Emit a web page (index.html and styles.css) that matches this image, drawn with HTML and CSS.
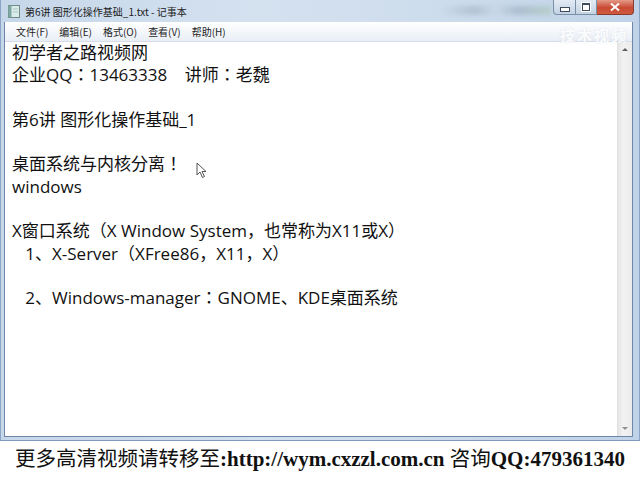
FILE: index.html
```html
<!DOCTYPE html>
<html lang="zh-CN">
<head>
<meta charset="utf-8">
<title>第6讲 图形化操作基础_1.txt - 记事本</title>
<link rel="stylesheet" href="styles.css">
</head>
<body>
<div class="window">
  <div class="titlebar">
    <svg class="app-icon" width="14" height="13" viewBox="0 0 14 13">
      <rect x="1.5" y="0.5" width="11" height="12" fill="#d9ece9" stroke="#6f8c8a"/>
      <rect x="1.5" y="0.5" width="3" height="12" fill="#7fa7a4"/>
      <line x1="6" y1="4" x2="11" y2="4" stroke="#a9c4c1"/>
      <line x1="6" y1="7" x2="11" y2="7" stroke="#a9c4c1"/>
    </svg>
    <span class="title">第6讲 图形化操作基础_1.txt - 记事本</span>
    <div class="blur-area"></div>
    <div class="controls">
      <div class="btn btn-min"><span class="min-glyph"></span></div>
      <div class="btn btn-max"><span class="max-glyph"></span></div>
      <div class="btn btn-close">
        <svg width="10" height="8" viewBox="0 0 10 8"><path d="M1 0.5 L9 7.5 M9 0.5 L1 7.5" stroke="#fff" stroke-width="2"/></svg>
      </div>
    </div>
  </div>
  <div class="client">
    <div class="menubar">
      <span class="menu-item">文件(F)</span>
      <span class="menu-item">编辑(E)</span>
      <span class="menu-item">格式(O)</span>
      <span class="menu-item">查看(V)</span>
      <span class="menu-item">帮助(H)</span>
      <span class="watermark">技术视频</span>
    </div>
    <div class="edit">
      <div class="text">
        <div class="line">初学者之路视频网</div>
        <div class="line">企业QQ：13463338&nbsp;&nbsp;&nbsp;&nbsp;讲师：老魏</div>
        <div class="line">&nbsp;</div>
        <div class="line">第6讲 图形化操作基础_1</div>
        <div class="line">&nbsp;</div>
        <div class="line">桌面系统与内核分离！</div>
        <div class="line">windows</div>
        <div class="line">&nbsp;</div>
        <div class="line">X窗口系统（X Window System，也常称为X11或X）</div>
        <div class="line">&nbsp;&nbsp;&nbsp;1、X-Server（XFree86，X11，X）</div>
        <div class="line">&nbsp;</div>
        <div class="line">&nbsp;&nbsp;&nbsp;2、Windows-manager：GNOME、KDE桌面系统</div>
        <svg class="cursor" width="12" height="17" viewBox="0 0 12 17">
          <path d="M1 1 L1 13 L4 10 L6.5 15.5 L8.5 14.5 L6 9.5 L10 9.5 Z" fill="#fff" stroke="#555" stroke-width="1" stroke-linejoin="round"/>
        </svg>
      </div>
      <div class="scrollbar">
        <span class="arrow-up"></span>
        <span class="arrow-down"></span>
      </div>
    </div>
  </div>
</div>
<div class="caption"><span class="cjk">更多高清视频请转移至</span>:http://wym.cxzzl.com.cn <span class="cjk">咨询</span>QQ:479361340</div>
</body>
</html>
```
FILE: styles.css
```css
html, body {
  margin: 0;
  padding: 0;
  background: #ffffff;
}
body {
  width: 640px;
  height: 496px;
  overflow: hidden;
  font-family: "Noto Sans CJK SC", sans-serif;
}
.window {
  height: 441px;
  background: linear-gradient(90deg, #c6d7ea 0%, #d4e1ef 40%, #cddcec 70%, #bfd2e7 100%);
  display: flex;
  flex-direction: column;
  box-sizing: border-box;
  border-left: 1px solid #8aa5c6;
  border-right: 1px solid #8aa5c6;
  border-bottom: 1px solid #7f9cbf;
}
.titlebar {
  height: 22px;
  display: flex;
  align-items: center;
  position: relative;
  flex: none;
}
.app-icon {
  margin-left: 6px;
  margin-top: 1px;
}
.title {
  margin-left: 4px;
  font-size: 10px;
  color: #1a1a1a;
  line-height: 14px;
  margin-top: 1px;
}
.blur-area {
  position: absolute;
  left: 440px;
  top: 6px;
  width: 110px;
  height: 9px;
  background: linear-gradient(90deg, rgba(150,165,185,0) 0%, rgba(150,165,185,0.45) 30%, rgba(200,210,220,0.2) 50%, rgba(140,160,180,0.45) 70%, rgba(150,190,150,0.35) 95%);
  filter: blur(2px);
}
.controls {
  margin-left: auto;
  align-self: flex-start;
  display: flex;
  margin-right: 5px;
}
.btn {
  height: 15px;
  box-sizing: border-box;
  border: 1px solid #7a8fa8;
  border-top: none;
  display: flex;
  align-items: center;
  justify-content: center;
}
.btn-min {
  width: 23px;
  border-radius: 0 0 0 4px;
  background: linear-gradient(#e3ebf4, #c3d2e3);
}
.btn-max {
  width: 21px;
  border-left: none;
  background: linear-gradient(#e3ebf4, #c3d2e3);
}
.btn-close {
  width: 37px;
  border-left: none;
  border-color: #8a3b2e;
  border-radius: 0 0 4px 0;
  background: linear-gradient(#e49a88, #c84a33 55%, #cf5a3e);
}
.min-glyph {
  width: 8px;
  height: 3px;
  background: #fff;
  border: 1px solid #3c4a5c;
  margin-top: 4px;
}
.max-glyph {
  width: 6px;
  height: 5px;
  border: 1px solid #3c4a5c;
  border-top-width: 2px;
  background: #fff;
  box-shadow: 0 0 0 1px #fff;
}
.client {
  flex: 1;
  display: flex;
  flex-direction: column;
  margin: 0 6px 3px 3px;
  border: 1px solid #6e87a8;
  border-top: none;
  background: #fff;
}
.menubar {
  height: 19px;
  flex: none;
  display: flex;
  align-items: center;
  gap: 11px;
  padding-left: 11px;
  background: linear-gradient(#ffffff, #e9eef6);
  border-bottom: 1px solid #d5dde8;
  position: relative;
}
.menu-item {
  font-size: 10px;
  color: #1e1e1e;
  line-height: 14px;
}
.watermark {
  position: absolute;
  right: 4px;
  top: 2px;
  font-size: 15px;
  font-weight: bold;
  color: rgba(255,255,255,0.9);
  letter-spacing: 2px;
  text-shadow: 0 0 2px rgba(200,208,222,0.5);
}
.edit {
  flex: 1;
  display: flex;
  min-height: 0;
}
.text {
  flex: 1;
  position: relative;
  padding: 0 0 0 7px;
  font-family: "Open Sans", "Noto Sans CJK JP", sans-serif;
  font-feature-settings: "locl" 0;
  font-size: 17px;
  line-height: 22.3px;
  color: #111;
  white-space: nowrap;
}
.line {
  height: 22.3px;
}
.cursor {
  position: absolute;
  left: 191px;
  top: 120px;
}
.scrollbar {
  width: 14px;
  flex: none;
  background: linear-gradient(90deg, #e6e6e6, #f2f2f2 40%, #ebebeb);
  border-left: 1px solid #e0e0e0;
  display: flex;
  flex-direction: column;
  justify-content: space-between;
  align-items: center;
  padding: 6px 0 6px;
}
.arrow-up {
  width: 0;
  height: 0;
  border-left: 3px solid transparent;
  border-right: 3px solid transparent;
  border-bottom: 3px solid #606060;
}
.arrow-down {
  width: 0;
  height: 0;
  border-left: 3px solid transparent;
  border-right: 3px solid transparent;
  border-top: 3px solid #909090;
}
.caption {
  padding: 4px 0 0 15px;
  font-family: "Liberation Serif", "Noto Sans CJK SC", serif;
  font-weight: bold;
  font-size: 21px;
  line-height: 24px;
  color: #111;
  white-space: nowrap;
}
.caption .cjk {
  font-family: "Noto Sans CJK SC", sans-serif;
  font-weight: normal;
  font-size: 20.5px;
}
```
